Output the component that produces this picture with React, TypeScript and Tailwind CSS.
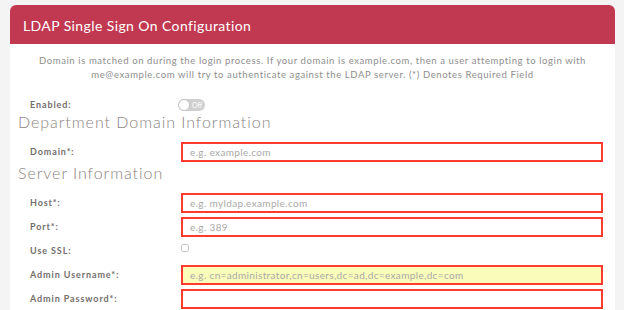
import React from "react";

const font = { fontFamily: "Lato, 'Open Sans', sans-serif" };

function Label({ children }: { children: React.ReactNode }) {
  return (
    <div className="w-[171px] shrink-0 pl-[20px] text-[9px] font-bold tracking-[0.9px] text-[#746e6c]">
      {children}
    </div>
  );
}

function Input({ placeholder, yellow }: { placeholder?: string; yellow?: boolean }) {
  return (
    <div
      className={`flex-1 h-[20px] border-2 border-[#ff3b2f] flex items-center px-[7px] text-[10px] tracking-[0.35px] text-[#a9a9a9] ${
        yellow ? "bg-[#fafcba]" : "bg-white"
      }`}
    >
      {placeholder}
    </div>
  );
}

function Heading({ children }: { children: React.ReactNode }) {
  return (
    <div className="pl-[8px] text-[16px] font-light tracking-[0.95px] text-[#8b8482] leading-[20px]">
      {children}
    </div>
  );
}

export default function App() {
  return (
    <div style={font} className="w-[624px] h-[310px] bg-[#f4f4f4] pt-[5px] pl-[10px] pr-[9px] overflow-hidden">
      <div className="bg-white rounded-t-[6px] h-full">
        <div className="h-[39px] bg-[#c13950] rounded-t-[6px] flex items-center pl-[13px] pt-[1px]">
          <span className="text-white text-[14px] tracking-[0.4px]">LDAP Single Sign On Configuration</span>
        </div>
        <div className="pt-[10px] text-center text-[9.5px] leading-[14px] tracking-[0.6px] text-[#8e8e8e]">
          <div>Domain is matched on during the login process. If your domain is example.com, then a user attempting to login with</div>
          <div>me@example.com will try to authenticate against the LDAP server. (*) Denotes Required Field</div>
        </div>
        <div className="pr-[12px] pt-[16px]">
          <div className="flex items-center h-[14px]">
            <Label>Enabled:</Label>
            <div className="w-[27px] h-[12px] rounded-full bg-[#cfcfcf] flex items-center -ml-[3px]">
              <div className="w-[12px] h-[12px] rounded-full bg-white border border-[#c4c4c4]" />
              <span className="text-[7px] text-white pl-[2px] leading-none">Off</span>
            </div>
          </div>
          <Heading>Department Domain Information</Heading>
          <div className="flex items-center mt-[10px]">
            <Label>Domain*:</Label>
            <Input placeholder="e.g. example.com" />
          </div>
          <div className="mt-[1px]">
            <Heading>Server Information</Heading>
          </div>
          <div className="flex items-center mt-[10px]">
            <Label>Host*:</Label>
            <Input placeholder="e.g. myldap.example.com" />
          </div>
          <div className="flex items-center mt-[4px]">
            <Label>Port*:</Label>
            <Input placeholder="e.g. 389" />
          </div>
          <div className="flex items-center h-[28px]">
            <Label>Use SSL:</Label>
            <div className="w-[8px] h-[8px] border border-[#c8c8c8] rounded-[2px] bg-white -mt-[6px]" />
          </div>
          <div className="flex items-center">
            <Label>Admin Username*:</Label>
            <Input placeholder="e.g. cn=administrator,cn=users,dc=ad,dc=example,dc=com" yellow />
          </div>
          <div className="flex items-center mt-[4px]">
            <Label>Admin Password*:</Label>
            <Input />
          </div>
        </div>
      </div>
    </div>
  );
}
